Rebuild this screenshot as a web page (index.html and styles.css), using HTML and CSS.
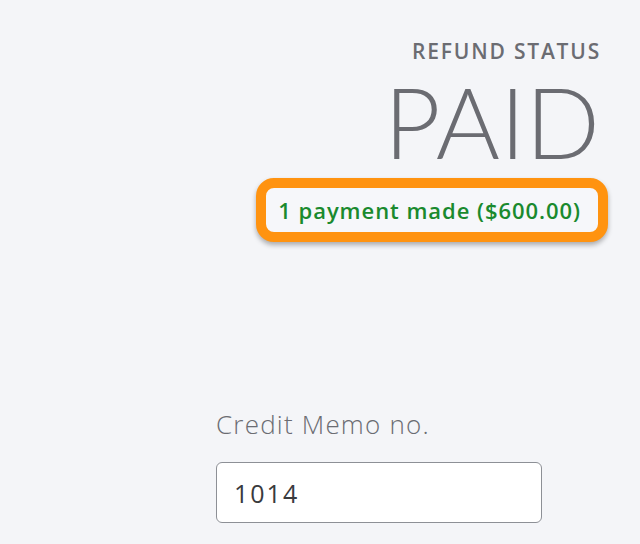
FILE: index.html
```html
<!DOCTYPE html>
<html lang="en">
<head>
    <meta charset="UTF-8">
    <title>Refund Receipt</title>
    <link rel="stylesheet" href="styles.css">
</head>
<body>
    <div class="page">
        <div class="status">
            <div class="status-label">REFUND STATUS</div>
            <div class="status-value">PAID</div>
            <div class="payments">1 payment made ($600.00)</div>
        </div>

        <div class="field">
            <label class="field-label" for="memo-no">Credit Memo no.</label>
            <input class="field-input" id="memo-no" type="text" value="1014">
        </div>
    </div>
</body>
</html>
```

FILE: styles.css
```css
body {
    margin: 0;
    background: #f4f5f8;
    font-family: "Open Sans", Lato, sans-serif;
    color: #393a3d;
}
.page {
    width: 640px;
    height: 544px;
    padding: 37px 32px 0 216px;
    box-sizing: border-box;
}
.status {
    display: flex;
    flex-direction: column;
    align-items: flex-end;
}
.status-label {
    font-size: 21px;
    font-weight: 600;
    letter-spacing: 1.8px;
    color: #6b6c72;
    line-height: 28px;
    margin-right: 7px;
}
.status-value {
    font-family: Lato, "Open Sans", sans-serif;
    font-size: 98px;
    font-weight: 300;
    line-height: 88px;
    color: #6b6c72;
    margin-right: 8px;
    margin-top: 12px;
}
.payments {
    margin-top: 13px;
    padding: 8px 17px 8px 12px;
    border: 10px solid #ff9310;
    border-radius: 18px;
    background: #f6f7fa;
    box-shadow: 0 3px 5px rgba(0, 0, 0, 0.3);
    color: #1a8a2e;
    font-size: 22px;
    font-weight: 600;
    letter-spacing: 0.95px;
    line-height: 28px;
    white-space: nowrap;
}
.field {
    display: flex;
    flex-direction: column;
    margin-top: 166px;
}
.field-label {
    font-size: 26px;
    font-weight: 300;
    letter-spacing: 1.2px;
    color: #6b6c72;
    line-height: 32px;
}
.field-input {
    margin-top: 22px;
    width: 326px;
    height: 61px;
    box-sizing: border-box;
    padding: 0 17px;
    border: 1.5px solid #8d9096;
    border-radius: 6px;
    background: #fff;
    font-family: "Open Sans", Lato, sans-serif;
    font-size: 25px;
    letter-spacing: 2px;
    color: #393a3d;
}
```
